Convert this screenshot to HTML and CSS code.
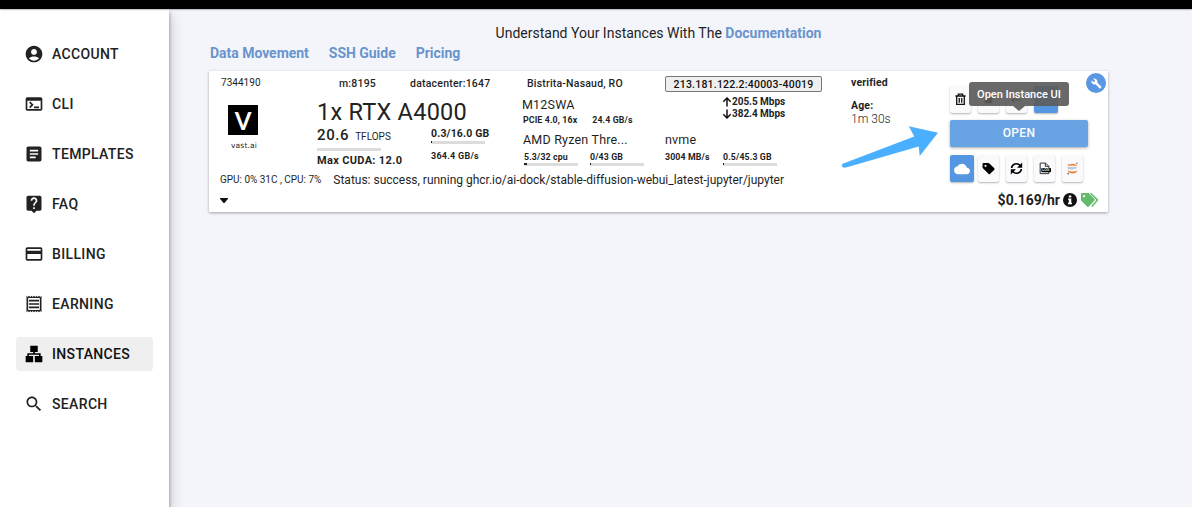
FILE: index.html
```html
<!DOCTYPE html>
<html lang="en">
<head>
<meta charset="utf-8">
<title>Instances</title>
<link rel="stylesheet" href="styles.css">
</head>
<body>
<div class="topbar"></div>
<div class="app">
  <nav class="sidebar">
    <a class="nav"><svg viewBox="0 0 24 24"><path d="M12 2C6.48 2 2 6.48 2 12s4.48 10 10 10 10-4.480 10-10S17.520 2 12 2zm0 4c1.930 0 3.500 1.570 3.500 3.500S13.930 13 12 13s-3.500-1.570-3.500-3.500S10.070 6 12 6zm0 14c-2.030 0-4.430-.82-6.140-2.880C7.550 15.800 9.680 15 12 15s4.450.8 6.140 2.120C16.430 19.180 14.030 20 12 20z"/></svg><span>ACCOUNT</span></a>
    <a class="nav"><svg viewBox="0 0 24 24"><path d="M20 4H4c-1.110 0-2 .9-2 2v12c0 1.100.89 2 2 2h16c1.100 0 2-.9 2-2V6c0-1.100-.89-2-2-2zm0 14H4V8h16v10zm-2-1h-6v-2h6v2zM7.500 17l-1.410-1.410L8.670 13l-2.590-2.590L7.500 9l4 4-4 4z"/></svg><span>CLI</span></a>
    <a class="nav"><svg viewBox="0 0 24 24"><path d="M19 3H5c-1.100 0-2 .9-2 2v14c0 1.100.9 2 2 2h14c1.100 0 2-.9 2-2V5c0-1.100-.9-2-2-2zm-5 14H7v-2h7v2zm3-4H7v-2h10v2zm0-4H7V7h10v2z"/></svg><span>TEMPLATES</span></a>
    <a class="nav"><svg viewBox="0 0 24 24"><path d="M19 2H5c-1.110 0-2 .9-2 2v14c0 1.100.89 2 2 2h4l3 3 3-3h4c1.100 0 2-.9 2-2V4c0-1.100-.9-2-2-2zm-6 16h-2v-2h2v2zm2.070-7.750l-.9.920C13.450 11.900 13 12.500 13 14h-2v-.5c0-1.100.45-2.100 1.170-2.830l1.240-1.260c.37-.36.59-.86.59-1.410 0-1.100-.9-2-2-2s-2 .9-2 2H8c0-2.210 1.790-4 4-4s4 1.790 4 4c0 .88-.36 1.680-.93 2.250z"/></svg><span>FAQ</span></a>
    <a class="nav"><svg viewBox="0 0 24 24"><path d="M20 4H4c-1.110 0-1.990.89-1.990 2L2 18c0 1.110.89 2 2 2h16c1.110 0 2-.89 2-2V6c0-1.110-.89-2-2-2zm0 14H4v-6h16v6zm0-10H4V6h16v2z"/></svg><span>BILLING</span></a>
    <a class="nav"><svg viewBox="0 0 24 24"><path d="M19.500 3.500L18 2l-1.500 1.500L15 2l-1.500 1.500L12 2l-1.500 1.500L9 2 7.500 3.500 6 2 4.500 3.500 3 2v20l1.500-1.500L6 22l1.500-1.500L9 22l1.500-1.500L12 22l1.500-1.500L15 22l1.500-1.500L18 22l1.500-1.500L21 22V2l-1.500 1.500zM19 19.090H5V4.910h14v14.180zM6 15h12v2H6zm0-4h12v2H6zm0-4h12v2H6z"/></svg><span>EARNING</span></a>
    <a class="nav active"><svg viewBox="0 0 24 24"><path d="M7.500 2h9v7.500h-3.500v1.700h7v3.300h2V22h-9v-7.500h5V13H6v1.500h5V22H2v-7.500h2v-3.300h7V9.500H7.500z"/></svg><span>INSTANCES</span></a>
    <a class="nav"><svg viewBox="0 0 24 24"><path d="M15.500 14h-.79l-.28-.27C15.410 12.590 16 11.110 16 9.500 16 5.910 13.090 3 9.500 3S3 5.910 3 9.500 5.910 16 9.500 16c1.610 0 3.090-.59 4.230-1.570l.27.28v.79l5 4.990L20.490 19l-4.990-5zm-6 0C7.010 14 5 11.990 5 9.500S7.010 5 9.500 5 14 7.010 14 9.500 11.990 14 9.500 14z"/></svg><span>SEARCH</span></a>
  </nav>
  <main class="main">
    <p class="intro">Understand Your Instances With The <a>Documentation</a></p>
    <div class="links"><a>Data Movement</a><a>SSH Guide</a><a>Pricing</a></div>
    <section class="card">
      <div class="wrench"><svg viewBox="0 0 24 24"><path d="M22.700 19l-9.100-9.100c.9-2.300.4-5-1.500-6.900-2-2-5-2.400-7.400-1.300L9 6 6 9 1.600 4.700C.4 7.100.9 10.100 2.900 12.100c1.900 1.900 4.600 2.400 6.900 1.500l9.100 9.100c.4.4 1 .4 1.400 0l2.300-2.300c.5-.4.5-1.100.1-1.400z"/></svg></div>
      <svg class="pointer" viewBox="0 0 100 46"><path d="M3 38.500 74 11.500 68.500 1 98 7.500 79.500 31 78.500 21.500 6 42.500Q2 43.500 1 41.500T3 38.500Z"/></svg>
      <div class="columns">
        <div class="col-logo">
          <div class="id">7344190</div>
          <div class="logo">V</div>
          <div class="brand">vast.ai</div>
        </div>
        <div class="col-gpu">
          <div class="machine"><span>m:8195</span><span>datacenter:1647</span></div>
          <div class="gpu">1x RTX A4000</div>
          <div class="split">
            <div class="flops-col">
              <div class="flops"><b>20.6</b><span>TFLOPS</span></div>
              <div class="bar w64"></div>
              <div class="cuda">Max CUDA: 12.0</div>
            </div>
            <div class="mem-col">
              <div class="vram">0.3/16.0 GB</div>
              <div class="bar w54"><i style="width:2%"></i></div>
              <div class="bw">364.4 GB/s</div>
            </div>
          </div>
        </div>
        <div class="col-cpu">
          <div class="place">Bistrita-Nasaud, RO</div>
          <div class="board">M12SWA</div>
          <div class="small pcie"><span>PCIE 4.0, 16x</span><span>24.4 GB/s</span></div>
          <div class="cpu">AMD Ryzen Thre...</div>
          <div class="meters">
            <div><div class="small">5.3/32 cpu</div><div class="bar w54"><i style="width:6%"></i></div></div>
            <div><div class="small">0/43 GB</div><div class="bar w54"><i style="width:1%"></i></div></div>
          </div>
        </div>
        <div class="col-net">
          <div class="ip">213.181.122.2:40003-40019</div>
          <div class="speeds">
            <div><svg viewBox="0 0 10 10"><path d="M5 9.500V1M1.300 4.700 5 1l3.700 3.700"/></svg>205.5 Mbps</div>
            <div><svg viewBox="0 0 10 10"><path d="M5 .5V9M1.300 5.300 5 9l3.700-3.700"/></svg>382.4 Mbps</div>
          </div>
          <div class="disk">nvme</div>
          <div class="meters disk-meters">
            <div><div class="small">3004 MB/s</div></div>
            <div><div class="small">0.5/45.3 GB</div><div class="bar w54"><i style="width:1%"></i></div></div>
          </div>
        </div>
        <div class="col-age">
          <div class="verified">verified</div>
          <div class="age-label">Age:</div>
          <div class="age">1m 30s</div>
        </div>
        <div class="col-actions">
          <div class="tooltip">Open Instance UI</div>
          <div class="buttons">
            <span class="btn"><svg viewBox="0 0 24 24"><path fill="none" stroke="#111" stroke-width="2.400" d="M2.500 5.500h19M8 5V2h8v3M5 6v15h14V6M9.700 9v9M14.300 9v9"/></svg></span>
            <span class="btn"><svg viewBox="0 0 24 24"><path d="M5 6h14v13H5z"/></svg></span>
            <span class="btn"><svg viewBox="0 0 24 24"><path d="M2 13 8 8v4h14v2H8v4z"/></svg></span>
            <span class="btn blue"><svg viewBox="0 0 24 24"><path fill="none" stroke="#fff" stroke-width="2" d="m2 6 6 6-6 6M10 18h12"/></svg></span>
          </div>
          <div class="open">OPEN</div>
          <div class="buttons lower">
            <span class="btn blue"><svg class="cloud" viewBox="0 0 24 24"><path fill="#fff" d="M19.350 10.040C18.670 6.590 15.640 4 12 4 9.110 4 6.600 5.640 5.350 8.040 2.340 8.360 0 10.910 0 14c0 3.310 2.690 6 6 6h13c2.760 0 5-2.240 5-5 0-2.640-2.050-4.780-4.650-4.960z"/></svg></span>
            <span class="btn"><svg viewBox="0 0 24 24"><path fill-rule="evenodd" d="M1 3.500Q1 2 2.500 2H12q1 0 1.700.7l9 9q1.200 1.200 0 2.400l-8 8q-1.200 1.200-2.400 0l-10.600-10.500Q1 11 1 10zM6.500 5a2 2 0 1 0 .01 0z"/></svg></span>
            <span class="btn"><svg viewBox="0 0 24 24"><path fill="none" stroke="#000" stroke-width="3" d="M3 11C3.500 4 13 0 19 6.500M21 13c-.5 7-10 11-16 4.500"/><path d="M22.500 1v9.500H13zM1.500 23v-9.500H11z"/></svg></span>
            <span class="btn"><svg viewBox="0 0 24 24"><path fill="none" stroke="#222" stroke-width="1.700" d="M4 21.500V2h10l6 6v13.500zM13.500 2v6H20"/><rect x="6" y="11" width="18" height="8" rx="1.500"/><text x="8" y="17.200" class="log">LOG</text></svg></span>
            <span class="btn"><svg viewBox="0 0 24 24"><path fill="#ef7d3b" d="M3 8.500Q5 3 12 3t9 5.500Q17 6.500 12 6.500T3 8.500zM3 15.500Q5 21 12 21t9-5.500Q17 17.500 12 17.500T3 15.500z"/><text x="3" y="13.500" class="jup">jupyter</text><circle cx="20" cy="2.500" r="1.500" fill="#777"/><circle cx="4" cy="21.500" r="1.700" fill="#777"/><circle cx="4" cy="4" r="1" fill="#777"/></svg></span>
          </div>
        </div>
      </div>
      <div class="status"><span class="temps">GPU: 0% 31C , CPU: 7%</span><span class="state">Status: success, running ghcr.io/ai-dock/stable-diffusion-webui_latest-jupyter/jupyter</span></div>
      <div class="footer">
        <svg class="caret" viewBox="0 0 8 5"><path d="M0 0h8v.8L4.500 5h-1L0 .8z"/></svg>
        <div class="price"><span>$0.169/hr</span>
          <svg class="info" viewBox="0 0 14 14"><circle cx="7" cy="7" r="7"/><path fill="#fff" d="M5.800 2.500h2.500v2H5.800zM5.200 5.500h3.100v4.300H9v1.500H5v-1.500h.8V7h-.6z"/></svg>
          <svg class="tags" viewBox="0 0 19 16"><path fill="#63bb6c" fill-rule="evenodd" d="M1 2Q1 1 2 1h6.500l6 6q.8.800 0 1.600l-5.600 6q-.9.900-1.800 0L1 8.500zM4 3a1.100 1.100 0 1 0 .01 0z"/><path fill="none" stroke="#63bb6c" stroke-width="1.500" d="M10.500 1.200 17.200 7.600q.5.500 0 1l-5.400 6"/></svg>
        </div>
      </div>
    </section>
  </main>
</div>
</body>
</html>
```
FILE: styles.css
```css
* { box-sizing: border-box; }
body { margin: 0; width: 1192px; height: 507px; overflow: hidden; background: #f4f5fa; color: #1f1f1f; font-family: Roboto, "Liberation Sans", sans-serif; display: flex; flex-direction: column; }
.topbar { height: 9px; flex: none; background: #000; box-shadow: 0 0 2px #555; z-index: 2; }
.app { flex: 1; display: flex; }
.sidebar { width: 169px; flex: none; padding: 28px 16px; background: #fff; box-shadow: 1px 3px 3px rgba(0,0,0,.25), 2px 6px 14px rgba(0,0,0,.16); display: flex; flex-direction: column; gap: 16px; }
.nav { width: 137px; height: 34px; border-radius: 4px; display: flex; align-items: center; padding-left: 8px; gap: 8px; font-size: 14px; font-weight: 500; letter-spacing: .35px; color: #222; }
.nav svg { width: 20px; height: 20px; fill: #222; }
.nav.active { background: #efefef; color: #111; }
.nav.active svg { fill: #000; }
.main { width: 1023px; padding: 15px 0 0 40px; }
.intro { margin: 0; width: 899px; text-align: center; font-size: 14px; line-height: 18px; }
.intro a, .links a { color: #6994cd; font-weight: 700; }
.links { display: flex; gap: 20px; padding-left: 1px; margin-top: 2px; font-size: 14px; line-height: 18px; letter-spacing: -.03px; }
.card { position: relative; width: 899px; height: 141px; margin-top: 9px; background: #fff; border-radius: 1px; box-shadow: 0 1px 3px rgba(0,0,0,.35); white-space: nowrap; }
.wrench { position: absolute; right: 2px; top: 2px; width: 20px; height: 20px; border-radius: 50%; background: #5997e2; display: grid; place-items: center; }
.wrench svg { width: 11px; fill: #fff; }
.pointer { position: absolute; left: 632px; top: 54px; width: 99px; height: 46px; fill: #4aafff; }
.columns { display: grid; grid-template-columns: 108px 205px 143px 186px 99px 138px; height: 99px; }
.id { padding: 6px 0 0 12px; font-size: 10px; line-height: 12px; letter-spacing: .03px; }
.logo { width: 30px; height: 30px; margin: 16px 0 0 19px; background: #000; color: #fff; text-align: center; font: 700 24px/31px Lato, sans-serif; }
.brand { margin: 6px 0 0 22px; font: 7.500px/9px "DejaVu Sans", sans-serif; letter-spacing: .15px; }
.machine { display: flex; padding: 6px 0 0 22px; gap: 34px; font-size: 10.500px; line-height: 14px; font-weight: 500; letter-spacing: .21px; }
.gpu { font-size: 23.500px; line-height: 28px; margin-top: 7px; letter-spacing: .25px; color: #222; }
.split { display: flex; gap: 50px; }
.flops-col { width: 64px; }
.flops { display: flex; align-items: baseline; gap: 6px; line-height: 18px; }
.flops b { font-size: 15px; font-weight: 500; letter-spacing: .6px; }
.flops span { font-size: 10px; }
.bar { height: 3px; background: #dcdcdc; }
.bar i { display: block; height: 2px; background: #222; }
.w64 { width: 64px; }
.w54 { width: 54px; }
.flops + .bar { margin-top: 2px; }
.cuda { font-size: 11px; line-height: 14px; font-weight: 700; margin-top: 3px; letter-spacing: .33px; }
.vram { font-size: 10.500px; line-height: 14px; margin-top: 1px; font-weight: 700; letter-spacing: .17px; }
.bw { font-size: 9px; font-weight: 700; line-height: 12px; margin-top: 6px; letter-spacing: .25px; }
.small { font-size: 8.800px; font-weight: 700; line-height: 12px; letter-spacing: .12px; }
.place { font-size: 10.500px; line-height: 14px; font-weight: 500; padding: 6px 0 0 5px; letter-spacing: .2px; }
.board, .cpu, .disk { font-size: 12.500px; line-height: 16px; letter-spacing: .2px; }
.board { margin-top: 6px; }
.pcie { display: flex; gap: 15px; padding-left: 1px; margin-top: 1px; }
.cpu { margin: 6px 0 0 1px; }
.meters { display: flex; gap: 12px; margin: 3px 0 0 2px; }
.ip { width: 157px; height: 16px; margin-top: 5px; border: 1px solid #777; border-radius: 2px; background: #efefef; color: #111; font-size: 10.500px; font-weight: 500; line-height: 16px; text-align: center; letter-spacing: .22px; }
.speeds { margin: 4px 0 0 57px; font-size: 10px; line-height: 12px; font-weight: 700; letter-spacing: -.04px; }
.speeds div { display: flex; align-items: center; }
.speeds svg { width: 10px; height: 10px; fill: none; stroke: #111; stroke-width: 1.500; }
.disk { margin-top: 12px; }
.disk-meters { margin-left: 0; gap: 0; }
.disk-meters > div:first-child { width: 58px; }
.verified, .age-label { font-size: 10.500px; line-height: 14px; font-weight: 700; letter-spacing: .15px; }
.verified { margin-top: 5px; }
.age-label { margin-top: 9px; }
.age { font-size: 12px; line-height: 13px; font-weight: 300; }
.col-actions { position: relative; padding-top: 15px; }
.buttons { display: flex; gap: 7px; }
.btn { width: 21px; height: 27px; border-radius: 2px; background: #fafafd; box-shadow: 0 1px 2px rgba(0,0,0,.3); display: grid; place-items: center; }
.btn svg { width: 13px; height: 13px; }
.btn.blue { width: 24px; background: #5596e2; }
.lower .blue { margin-right: -3px; }
.btn .cloud { width: 16px; height: 16px; }
.log { font: 700 6px "Liberation Sans", sans-serif; fill: #fff; }
.jup { font: 5.500px "Liberation Sans", sans-serif; fill: #777; }
.open { height: 27px; margin: 7px 0 8px; border-radius: 2px; background: #68a3e4; color: #fff; box-shadow: 0 1px 3px rgba(0,0,0,.35); font-size: 12px; font-weight: 500; line-height: 27px; text-align: center; letter-spacing: .3px; }
.tooltip { position: absolute; z-index: 1; left: 19px; top: 11px; width: 100px; height: 24px; border-radius: 3px; background: rgba(92,92,92,.92); color: #fff; font-size: 11px; font-weight: 500; line-height: 25px; text-align: center; }
.tooltip::after { content: ""; position: absolute; left: 44px; top: 24px; border: 6px solid transparent; border-top: 5px solid #686868; border-bottom: 0; }
.status { display: flex; align-items: center; padding-left: 11px; height: 19px; gap: 12px; }
.temps { font-size: 10px; letter-spacing: -.02px; }
.state { font-size: 12px; letter-spacing: -.01px; }
.footer { display: flex; justify-content: space-between; align-items: center; height: 22px; padding: 0 10px 0 11px; }
.caret { width: 8px; height: 5px; fill: #111; }
.price { display: flex; align-items: center; font-size: 14px; font-weight: 700; margin-right: -1px; }
.info { width: 14px; height: 14px; margin: 0 3px; fill: #111; }
.tags { width: 19px; height: 16px; }
```
